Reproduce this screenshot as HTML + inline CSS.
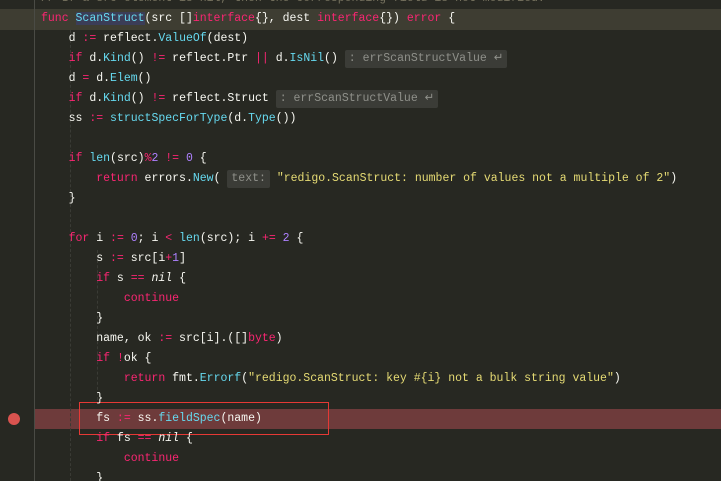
<!DOCTYPE html>
<html><head><meta charset="utf-8"><style>
html,body{margin:0;width:721px;height:481px;overflow:hidden}
body{background:#272822;position:relative;font-family:"Liberation Mono",monospace;font-size:11.5px;color:#f8f8f2}
.l{position:absolute;left:41px;height:20px;line-height:20px;white-space:pre}
.k{color:#f92672}.f{color:#66d9ef}.s{color:#e6db74}.n{color:#ae81ff}.c{color:#75715e}.i{font-style:italic}
.h{background:#3b3c37;color:#8f908a;padding:0 4px;border-radius:2px;display:inline-block;line-height:18px}
.g{position:absolute;width:0;border-left:1px dashed #3a3b35}
</style></head><body>
<div style="position:absolute;left:0;top:9px;width:721px;height:21px;background:#3e3d32"></div>
<div style="position:absolute;left:35px;top:409px;width:686px;height:20px;background:#6e3b3b"></div>
<div style="position:absolute;left:8px;top:413px;width:12px;height:12px;border-radius:50%;background:#d9534f"></div>
<div style="position:absolute;left:34px;top:0;height:481px;width:1px;background:#4a4b45"></div>
<div class="g" style="left:70px;top:30px;height:451px"></div>
<div class="g" style="left:97px;top:250px;height:150px"></div>
<div style="position:absolute;left:79px;top:402px;width:248px;height:31px;border:1px solid #e53935"></div>
<div class="l c" style="top:-11px">// If a src element is nil, then the corresponding field is not modified.</div>
<div class="l" style="top:9px"><span class="k">func</span> <span class="f" style="background:#3b3d57">ScanStruct</span>(src []<span class="k">interface</span>{}, dest <span class="k">interface</span>{}) <span class="k">error</span> {</div>
<div class="l" style="top:29px">    d <span class="k">:=</span> reflect.<span class="f">ValueOf</span>(dest)</div>
<div class="l" style="top:49px">    <span class="k">if</span> d.<span class="f">Kind</span>() <span class="k">!=</span> reflect.Ptr <span class="k">||</span> d.<span class="f">IsNil</span>() <span class="h">: errScanStructValue ↵</span></div>
<div class="l" style="top:69px">    d <span class="k">=</span> d.<span class="f">Elem</span>()</div>
<div class="l" style="top:89px">    <span class="k">if</span> d.<span class="f">Kind</span>() <span class="k">!=</span> reflect.Struct <span class="h">: errScanStructValue ↵</span></div>
<div class="l" style="top:109px">    ss <span class="k">:=</span> <span class="f">structSpecForType</span>(d.<span class="f">Type</span>())</div>
<div class="l" style="top:149px">    <span class="k">if</span> <span class="f">len</span>(src)<span class="k">%</span><span class="n">2</span> <span class="k">!=</span> <span class="n">0</span> {</div>
<div class="l" style="top:169px">        <span class="k">return</span> errors.<span class="f">New</span>( <span class="h">text:</span> <span class="s">"redigo.ScanStruct: number of values not a multiple of 2"</span>)</div>
<div class="l" style="top:189px">    }</div>
<div class="l" style="top:229px">    <span class="k">for</span> i <span class="k">:=</span> <span class="n">0</span>; i <span class="k">&lt;</span> <span class="f">len</span>(src); i <span class="k">+=</span> <span class="n">2</span> {</div>
<div class="l" style="top:249px">        s <span class="k">:=</span> src[i<span class="k">+</span><span class="n">1</span>]</div>
<div class="l" style="top:269px">        <span class="k">if</span> s <span class="k">==</span> <span class="i">nil</span> {</div>
<div class="l" style="top:289px">            <span class="k">continue</span></div>
<div class="l" style="top:309px">        }</div>
<div class="l" style="top:329px">        name, ok <span class="k">:=</span> src[i].([]<span class="k">byte</span>)</div>
<div class="l" style="top:349px">        <span class="k">if</span> <span class="k">!</span>ok {</div>
<div class="l" style="top:369px">            <span class="k">return</span> fmt.<span class="f">Errorf</span>(<span class="s">"redigo.ScanStruct: key #{i} not a bulk string value"</span>)</div>
<div class="l" style="top:389px">        }</div>
<div class="l" style="top:409px">        fs <span class="k">:=</span> ss.<span class="f">fieldSpec</span>(name)</div>
<div class="l" style="top:429px">        <span class="k">if</span> fs <span class="k">==</span> <span class="i">nil</span> {</div>
<div class="l" style="top:449px">            <span class="k">continue</span></div>
<div class="l" style="top:469px">        }</div>
</body></html>
